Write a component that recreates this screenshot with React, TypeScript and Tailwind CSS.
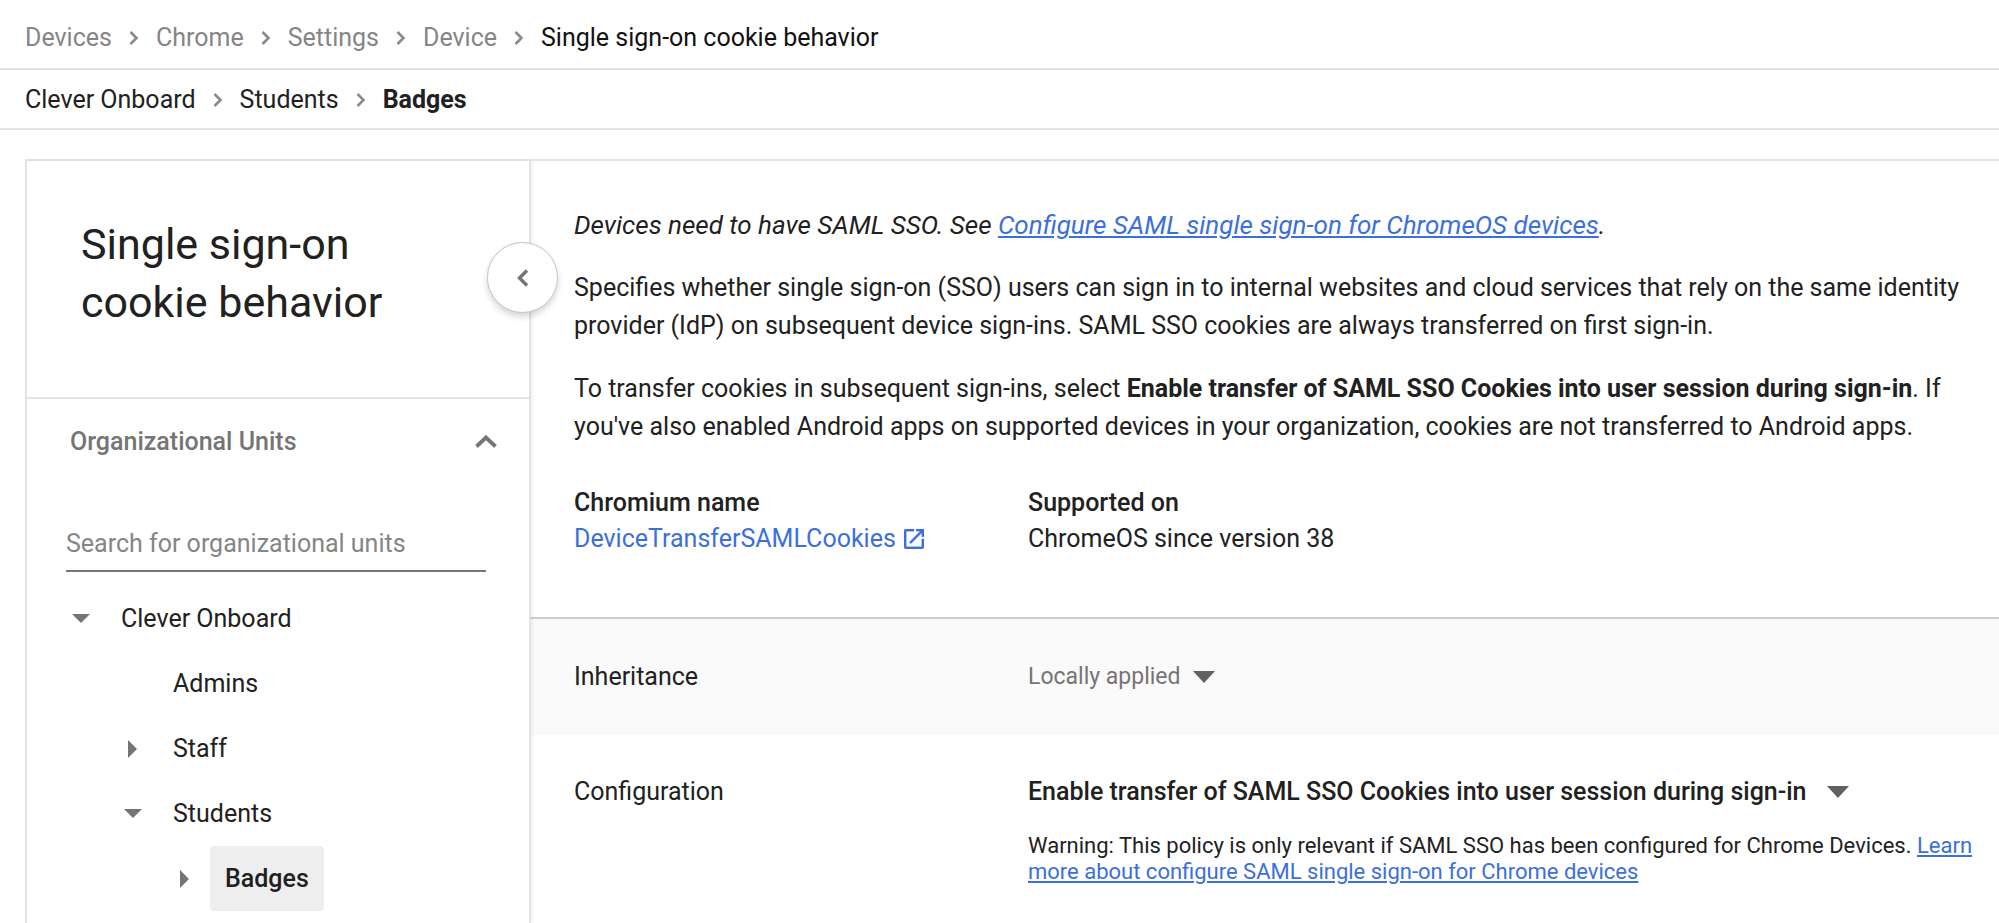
import { useState } from 'react';
import clsx from 'clsx';

interface OrgUnit {
  id: string;
  name: string;
  depth: number;
  state: 'open' | 'closed' | 'leaf';
}

const pagePath = ['Devices', 'Chrome', 'Settings', 'Device'];
const orgPath = ['Clever Onboard', 'Students'];

const orgUnits: OrgUnit[] = [
  { id: 'root', name: 'Clever Onboard', depth: 0, state: 'open' },
  { id: 'admins', name: 'Admins', depth: 1, state: 'leaf' },
  { id: 'staff', name: 'Staff', depth: 1, state: 'closed' },
  { id: 'students', name: 'Students', depth: 1, state: 'open' },
  { id: 'badges', name: 'Badges', depth: 2, state: 'closed' },
];

const indent = ['pl-0', 'pl-[52px]', 'pl-[104px]'];

function Separator() {
  return (
    <svg viewBox="0 0 10 14" className="h-[14px] w-[10px]" aria-hidden="true">
      <path d="M1.5 1l6 6-6 6" fill="none" stroke="#8a8a8a" strokeWidth="2.6" />
    </svg>
  );
}

function Caret() {
  return (
    <svg viewBox="0 0 22 12" className="pointer-events-none h-3 w-[22px]" aria-hidden="true">
      <path d="M0 0h22L11 12z" fill="#616161" />
    </svg>
  );
}

function Breadcrumb({ label, path, children }: { label: string; path: string[]; children: React.ReactNode }) {
  return (
    <nav aria-label={label} className="px-[25px]">
      <ol className="flex items-center gap-[17px]">
        {path.map((item) => (
          <li key={item} className="flex items-center gap-[17px]">
            <a href="#">{item}</a>
            <Separator />
          </li>
        ))}
        <li aria-current="page">{children}</li>
      </ol>
    </nav>
  );
}

function OrgUnitRow({ unit, selected, onSelect }: { unit: OrgUnit; selected: boolean; onSelect: () => void }) {
  return (
    <li className={clsx('flex h-[65px] items-center', indent[unit.depth])}>
      <span className="flex w-[40px] justify-center pr-[11px]">
        {unit.state === 'open' && (
          <svg viewBox="0 0 18 9" className="h-[9px] w-[18px]" aria-hidden="true">
            <path d="M0 0h18L9 9z" fill="#757575" />
          </svg>
        )}
        {unit.state === 'closed' && (
          <svg viewBox="0 0 9 18" className="h-[18px] w-[9px]" aria-hidden="true">
            <path d="M0 0v18l9-9z" fill="#757575" />
          </svg>
        )}
      </span>
      <button
        type="button"
        onClick={onSelect}
        className={clsx('h-full rounded-[4px] px-[15px]', selected && 'bg-[#eeeeee] font-medium')}
      >
        {unit.name}
      </button>
    </li>
  );
}

export default function App() {
  const [selected, setSelected] = useState('badges');
  const [search, setSearch] = useState('');

  return (
    <div className="flex min-h-screen flex-col bg-white font-['Roboto',sans-serif] text-[25px] leading-[38px] text-[#212121]">
      {/* Page breadcrumb */}
      <header className="border-b-2 border-[#e3e3e3] pt-[19px] pb-[11px] text-[#858585]">
        <Breadcrumb label="Page" path={pagePath}>
          <span className="text-[#111111]">Single sign-on cookie behavior</span>
        </Breadcrumb>
      </header>

      {/* Organizational unit breadcrumb */}
      <div className="border-b-2 border-[#e3e3e3] pt-[11px] pb-[9px]">
        <Breadcrumb label="Organizational unit" path={orgPath}>
          <span className="font-bold">Badges</span>
        </Breadcrumb>
      </div>

      <div className="mt-[29px] ml-[25px] flex grow border-t-2 border-l-2 border-[#e3e3e3]">
        {/* Sidebar */}
        <aside className="relative w-[504px] shrink-0 border-r-2 border-[#e3e3e3] shadow-[2px_0_3px_rgba(0,0,0,0.05)]">
          <div className="border-b-2 border-[#e3e3e3] px-[54px] pt-[54px] pb-[66px]">
            <h1 className="w-[340px] text-[43px] leading-[58px]">Single sign-on cookie behavior</h1>
          </div>
          <button
            type="button"
            aria-label="Collapse panel"
            className="absolute top-[81px] -right-[29px] flex size-[71px] items-center justify-center rounded-full border border-[#c4c4c4] bg-white shadow-[0_4px_6px_rgba(0,0,0,0.16)]"
          >
            <svg viewBox="0 0 12 18" className="h-[18px] w-3" aria-hidden="true">
              <path d="M10 1.5L2.5 9l7.5 7.5" fill="none" stroke="#757575" strokeWidth="3.4" />
            </svg>
          </button>

          <button
            type="button"
            aria-expanded="true"
            className="flex w-full items-center justify-between pt-[24px] pr-[32px] pl-[43px] font-medium text-[#757575]"
          >
            Organizational Units
            <svg viewBox="0 0 22 14" className="h-[14px] w-[22px]" aria-hidden="true">
              <path d="M1.5 11.5L11 2.5l9.500 9" fill="none" stroke="#757575" strokeWidth="3.8" />
            </svg>
          </button>

          <div className="mt-[64px] mr-[43px] ml-[39px]">
            <input
              type="text"
              aria-label="Search for organizational units"
              value={search}
              onChange={(e) => setSearch(e.target.value)}
              placeholder="Search for organizational units"
              className="block w-full border-b-2 border-[#757575] pb-[7px] outline-none placeholder:text-[#858585]"
            />
          </div>

          <ul className="mt-[14px] ml-[39px] pb-3">
            {orgUnits.map((unit) => (
              <OrgUnitRow
                key={unit.id}
                unit={unit}
                selected={unit.id === selected}
                onSelect={() => setSelected(unit.id)}
              />
            ))}
          </ul>
        </aside>

        {/* Setting details */}
        <main className="min-w-0 grow">
          <section className="space-y-[25px] border-b-2 border-[#cccccc] pt-[45px] pr-6 pb-[60px] pl-[43px]">
            <p className="text-[26px] italic">
              Devices need to have SAML SSO. See{' '}
              <a href="#" className="text-[#3b6fdc] underline">
                Configure SAML single sign-on for ChromeOS devices
              </a>
              .
            </p>
            <p>
              Specifies whether single sign-on (SSO) users can sign in to internal websites and cloud services that
              rely on the same identity provider (IdP) on subsequent device sign-ins. SAML SSO cookies are always
              transferred on first sign-in.
            </p>
            <p>
              To transfer cookies in subsequent sign-ins, select{' '}
              <b>Enable transfer of SAML SSO Cookies into user session during sign-in</b>. If you've also enabled
              Android apps on supported devices in your organization, cookies are not transferred to Android apps.
            </p>
            <dl className="flex pt-[14px] leading-[36px]">
              <div className="w-[454px] shrink-0">
                <dt className="font-medium">Chromium name</dt>
                <dd>
                  <a href="#" className="flex items-center gap-2 text-[#3b6fdc]">
                    DeviceTransferSAMLCookies
                    <svg viewBox="3 3 18 18" className="size-[20px]" aria-hidden="true">
                      <path
                        fill="currentColor"
                        stroke="currentColor"
                        strokeWidth="0.3"
                        d="M19 19H5V5h7V3H5a2 2 0 0 0-2 2v14a2 2 0 0 0 2 2h14c1.1 0 2-.9 2-2v-7h-2v7zM14 3v2h3.590l-9.830 9.830 1.410 1.410L19 6.410V10h2V3h-7z"
                      />
                    </svg>
                  </a>
                </dd>
              </div>
              <div>
                <dt className="font-medium">Supported on</dt>
                <dd>ChromeOS since version 38</dd>
              </div>
            </dl>
          </section>

          <section className="flex bg-[#fafafa] py-[39px] pr-6 pl-[43px]">
            <label htmlFor="inheritance" className="w-[454px] shrink-0">
              Inheritance
            </label>
            <div className="flex items-center gap-3 text-[23px] text-[#757575]">
              <select id="inheritance" className="appearance-none outline-none">
                <option>Locally applied</option>
              </select>
              <Caret />
            </div>
          </section>

          <section className="flex py-[38px] pr-6 pl-[43px]">
            <label htmlFor="configuration" className="w-[454px] shrink-0">
              Configuration
            </label>
            <div>
              <div className="flex items-center gap-5">
                <select id="configuration" className="appearance-none font-medium outline-none">
                  <option>Enable transfer of SAML SSO Cookies into user session during sign-in</option>
                </select>
                <Caret />
              </div>
              <p className="mt-[22px] text-[22px] leading-[26px]">
                Warning: This policy is only relevant if SAML SSO has been configured for Chrome Devices.{' '}
                <a href="#" className="text-[#3b6fdc] underline">
                  Learn more about configure SAML single sign-on for Chrome devices
                </a>
              </p>
            </div>
          </section>
        </main>
      </div>
    </div>
  );
}
